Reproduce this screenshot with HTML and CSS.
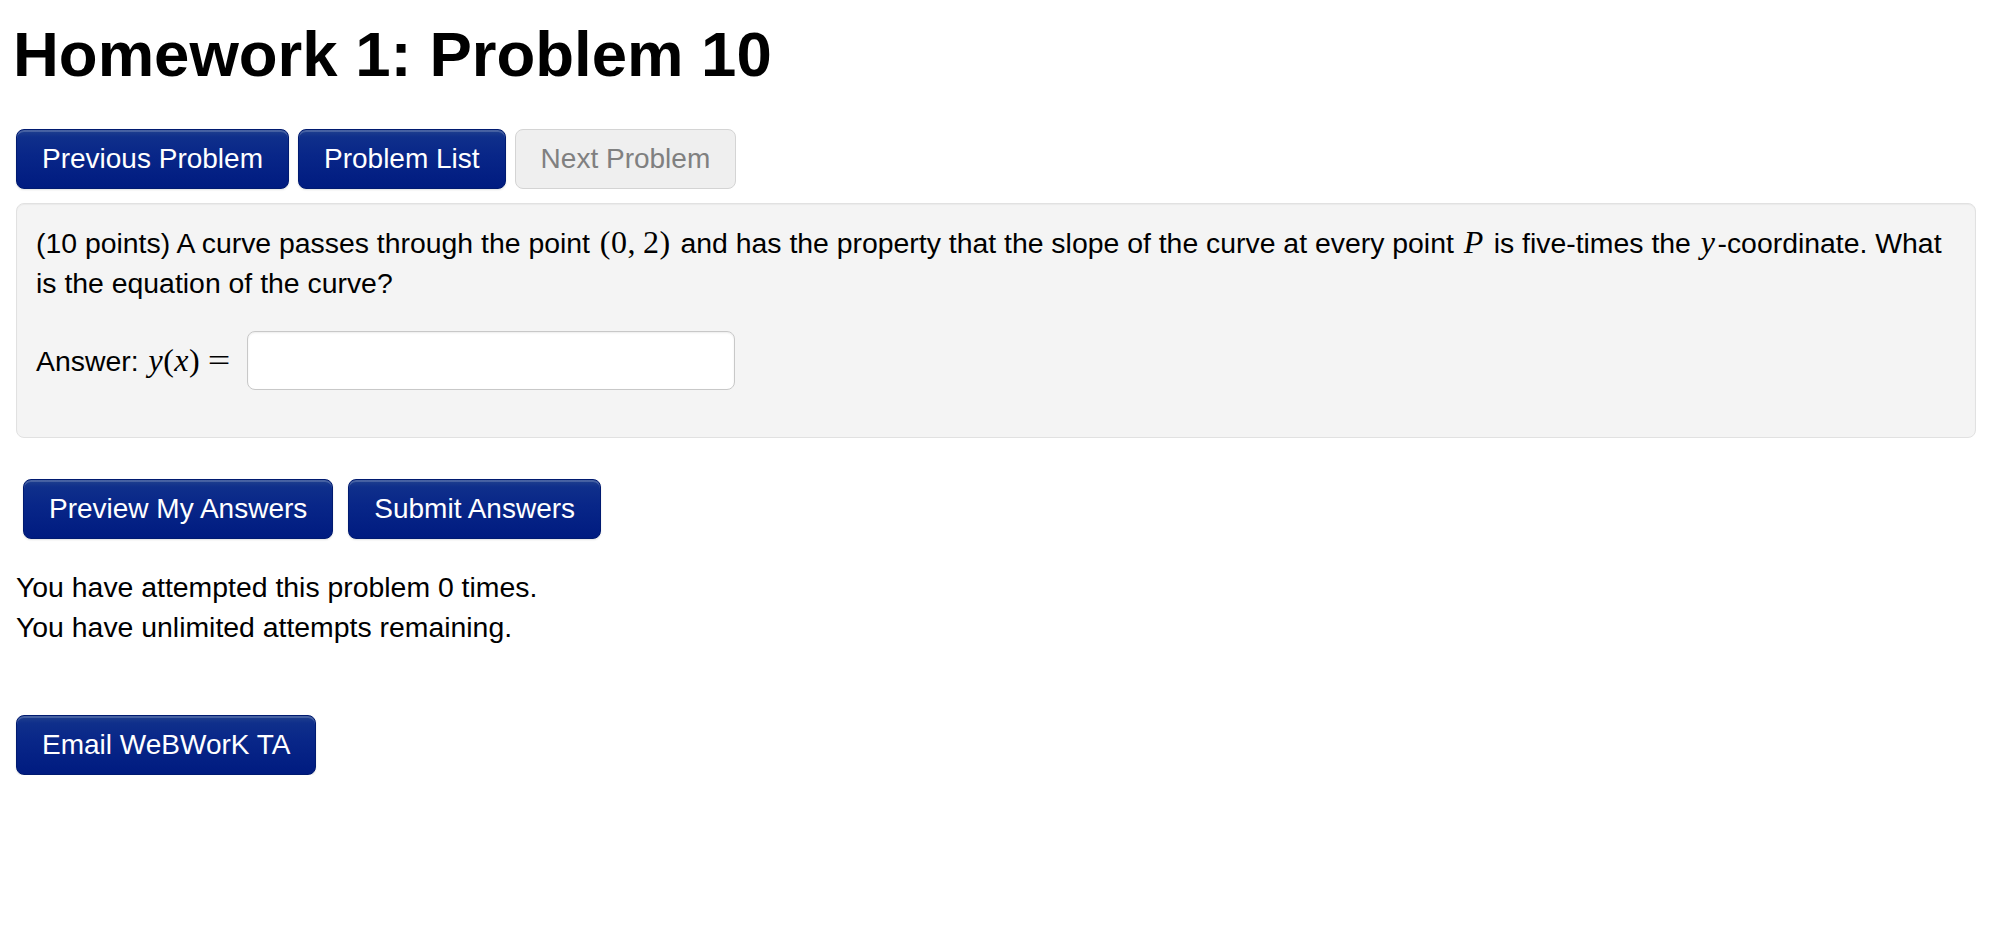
FILE: index.html
```html
<!DOCTYPE html>
<html lang="en">
<head>
<meta charset="utf-8">
<title>Homework 1: Problem 10</title>
<link rel="stylesheet" href="styles.css">
</head>
<body>
<div class="page">
  <h1 class="title">Homework 1: Problem 10</h1>

  <div class="nav">
    <button class="btn btn-primary" type="button">Previous Problem</button>
    <button class="btn btn-primary" type="button">Problem List</button>
    <button class="btn btn-disabled" type="button" disabled>Next Problem</button>
  </div>

  <div class="well">
    <p class="problem">(10 points) A curve passes through the point <span class="math">(0,&#8201;2)</span> and has the property that the slope of the curve at every point <span class="math"><i class="var">P</i></span> is five-times the <span class="math"><i class="var">y</i></span>-coordinate. What is the equation of the curve?</p>
    <div class="answer-row">
      <span class="label">Answer: <span class="math"><i class="var">y</i>(<i class="var">x</i>)<span class="eq">=</span></span></span>
      <input class="answer-input" type="text" aria-label="answer">
    </div>
  </div>

  <div class="actions">
    <button class="btn btn-primary" type="button">Preview My Answers</button>
    <button class="btn btn-primary" type="button">Submit Answers</button>
  </div>

  <div class="attempts">
    <div>You have attempted this problem 0 times.</div>
    <div>You have unlimited attempts remaining.</div>
  </div>

  <div class="email">
    <button class="btn btn-primary" type="button">Email WeBWorK TA</button>
  </div>
</div>
</body>
</html>
```
FILE: styles.css
```css
html, body {
  margin: 0;
  padding: 0;
  background: #ffffff;
}

body {
  font-family: "Liberation Sans", Arial, Helvetica, sans-serif;
  font-size: 28.4px;
  line-height: 40px;
  color: #000000;
}

.page {
  padding: 0 16px;
}

.title {
  font-size: 63.5px;
  font-weight: bold;
  line-height: 70px;
  margin: 19px 0 40px -3px;
}

.nav {
  display: flex;
  gap: 9px;
}

.btn {
  font-family: "Liberation Sans", Arial, Helvetica, sans-serif;
  font-size: 28px;
  line-height: 40px;
  height: 60px;
  padding: 9px 25px;
  border-radius: 8px;
  border: 1px solid transparent;
  box-sizing: border-box;
  cursor: pointer;
  white-space: nowrap;
}

.btn-primary {
  color: #ffffff;
  background: linear-gradient(to bottom, #21428f 0%, #0f2f8b 12%, #082688 45%, #001b80 100%);
  border-color: #001a70;
  box-shadow: inset 0 2px 0 rgba(255, 255, 255, 0.18), 0 1px 2px rgba(0, 0, 0, 0.12);
}

.btn-disabled {
  color: #808080;
  background: #efefef;
  border-color: #d4d4d4;
  cursor: default;
}

.well {
  margin-top: 14px;
  background: #f4f4f4;
  border: 1px solid #e1e1e1;
  border-radius: 8px;
  padding: 19px;
  box-shadow: inset 0 1px 1px rgba(0, 0, 0, 0.04);
}

.problem {
  margin: 0 0 28px;
  padding-right: 10px;
}

.math {
  font-family: "Liberation Serif", "Times New Roman", serif;
  font-size: 32px;
  line-height: 1;
  letter-spacing: 0.5px;
  margin: 0 2px;
}

.var {
  font-style: italic;
}

.eq {
  display: inline-block;
  margin-left: 10px;
  transform: scaleX(1.25);
}

.answer-row {
  display: flex;
  align-items: center;
  gap: 16px;
  margin-bottom: 28px;
}

.answer-input {
  width: 488px;
  height: 59px;
  box-sizing: border-box;
  background: #ffffff;
  border: 1px solid #c8c8c8;
  border-radius: 8px;
  box-shadow: inset 0 1px 2px rgba(0, 0, 0, 0.08);
  font-size: 28px;
  padding: 0 12px;
}

.actions {
  display: flex;
  gap: 15px;
  margin: 41px 0 0 7px;
}

.attempts {
  margin-top: 28px;
}

.email {
  margin-top: 68px;
}
```
